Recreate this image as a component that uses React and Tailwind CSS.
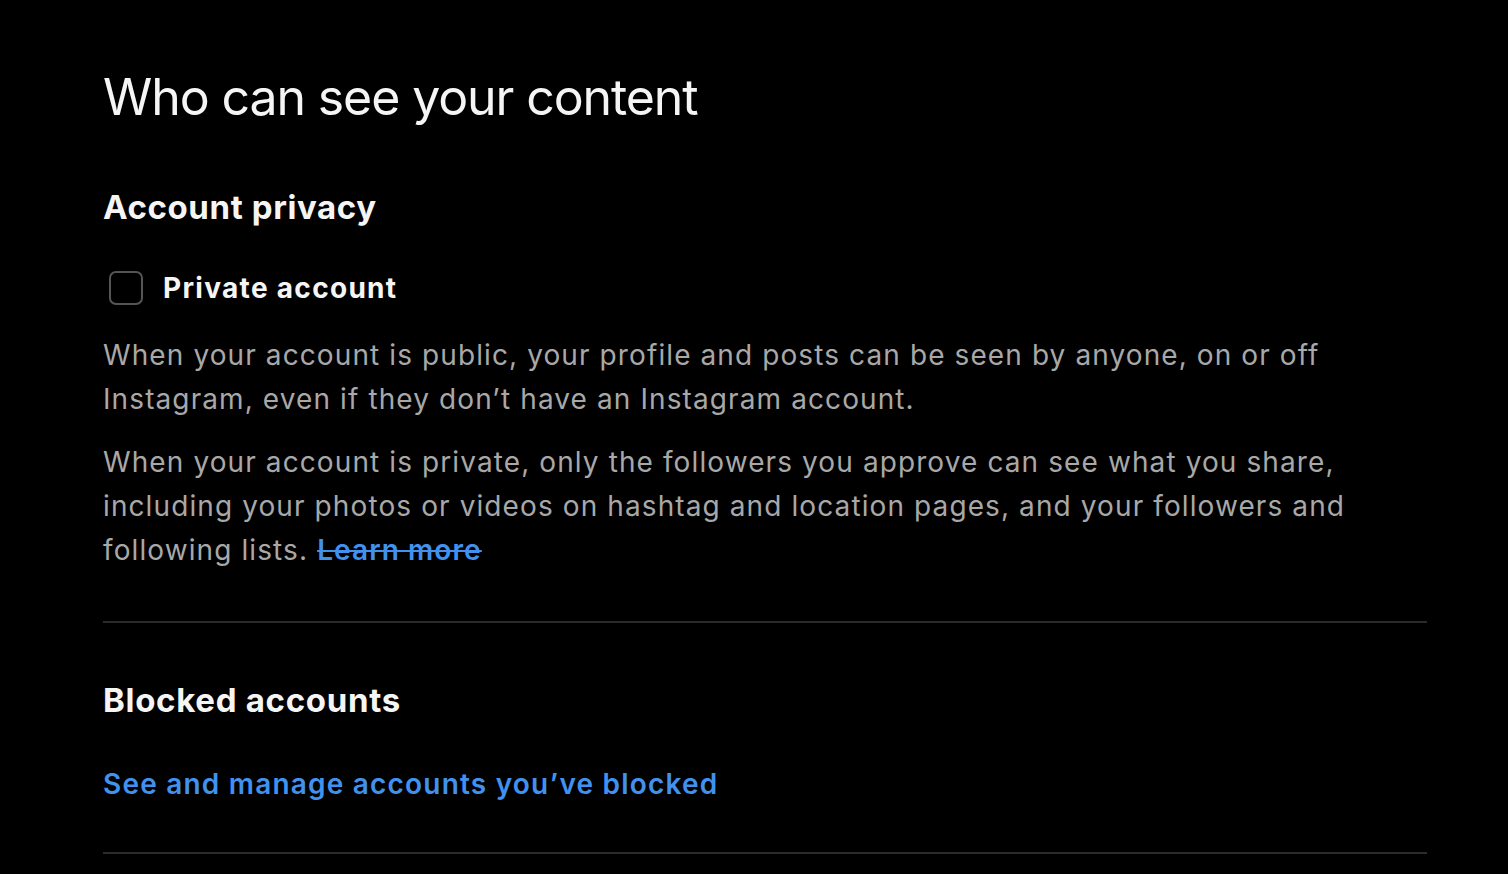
export default function App() {
  return (
    <div className="min-h-screen bg-black text-[#f5f5f5]" style={{ fontFamily: 'Inter, "Noto Sans", sans-serif' }}>
      <div className="w-[1324px] ml-[103px] pt-[65px]">
        <h1 className="text-[50px] leading-[64px] font-normal tracking-[-1.1px]">Who can see your content</h1>

        <h2 className="mt-[58px] text-[33px] leading-[40px] font-bold tracking-[0.6px]">Account privacy</h2>

        <label className="mt-[44px] flex items-center h-[34px]">
          <span className="ml-[6px] w-[34px] h-[34px] rounded-[7px] border-2 border-[#555555]"></span>
          <span className="ml-[20px] text-[28px] font-bold tracking-[1.3px]">Private account</span>
        </label>

        <p className="mt-[28px] text-[28px] leading-[44px] text-[#a8a8a8] tracking-[1.1px]">
          When your account is public, your profile and posts can be seen by anyone, on or off Instagram, even if they don’t have an Instagram account.
        </p>
        <p className="mt-[19px] text-[28px] leading-[44px] text-[#a8a8a8] tracking-[1.1px]">
          When your account is private, only the followers you approve can see what you share, including your photos or videos on hashtag and location pages, and your followers and following lists.{' '}
          <a className="text-[#4192ef] font-semibold line-through">Learn more</a>
        </p>

        <div className="mt-[49px] h-[2px] bg-[#2b2b2b]"></div>

        <h2 className="mt-[57px] text-[33px] leading-[40px] font-bold tracking-[0.7px]">Blocked accounts</h2>

        <a className="mt-[42px] block text-[28px] leading-[44px] font-semibold text-[#4192ef] tracking-[1.2px]">See and manage accounts you’ve blocked</a>

        <div className="mt-[46px] h-[2px] bg-[#2b2b2b]"></div>
      </div>
    </div>
  );
}
